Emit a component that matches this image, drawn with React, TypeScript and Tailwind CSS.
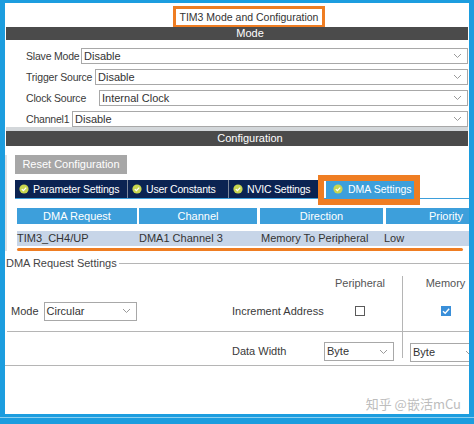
import React from 'react';

function Chevron({ color = '#9a9a9a' }: { color?: string }) {
  return (
    <svg width="9" height="6" viewBox="0 0 9 6" className="shrink-0">
      <path d="M1 1 L4.5 4.5 L8 1" fill="none" stroke={color} strokeWidth="1" />
    </svg>
  );
}

function CheckDot() {
  return (
    <svg width="10" height="10" viewBox="0 0 10 10" className="shrink-0">
      <circle cx="5" cy="5" r="4.6" fill="#c8d650" />
      <path d="M2.8 5.1 L4.4 6.6 L7.2 3.6" fill="none" stroke="#ffffff" strokeWidth="1.3" />
    </svg>
  );
}

function Select({ value, className }: { value: string; className: string }) {
  return (
    <div className={`flex items-center justify-between border border-[#a8a8a8] bg-white pl-[2px] pr-[5px] ${className}`}>
      <span className="text-[#333]">{value}</span>
      <Chevron />
    </div>
  );
}

const modeRows = [
  { label: 'Slave Mode', value: 'Disable', w: 'w-[55px]' },
  { label: 'Trigger Source', value: 'Disable', w: 'w-[69px]' },
  { label: 'Clock Source', value: 'Internal Clock', w: 'w-[73px]' },
  { label: 'Channel1', value: 'Disable', w: 'w-[46px]' },
];

const tabs = [
  { label: 'Parameter Settings', w: 'w-[113px]' },
  { label: 'User Constants', w: 'w-[101px]' },
  { label: 'NVIC Settings', w: 'w-[91px]' },
];

export default function App() {
  return (
    <div className="w-[474px] h-[424px] overflow-hidden bg-[#1c9ddf] font-['Liberation_Sans',Arial,sans-serif] text-[11px] leading-none">
      <div className="pl-[5px] pt-[3px] pr-[5px]">
        <div className="relative w-[464px] h-[411px] overflow-hidden bg-white text-[#3a3a3a]">
          {/* title */}
          <div className="h-[24px] flex items-end justify-center pl-[24px]">
            <div className="h-[21px] border-[3px] border-b-[2px] border-[#ef7d22] bg-white px-[4px] flex items-center text-[#333] text-[10.5px]">
              TIM3 Mode and Configuration
            </div>
          </div>

          <div className="mx-[1px] h-[13px] bg-[#4b4b4b] text-white text-center leading-[13px] pl-[26px]">Mode</div>

          <div className="pt-[8px] pl-[21px] pr-[1px] flex flex-col gap-[5px]">
            {modeRows.map((r) => (
              <div key={r.label} className="flex items-center h-[16px]">
                <span className={`${r.w} shrink-0 whitespace-nowrap text-[10.5px] tracking-[-0.2px]`}>{r.label}</span>
                <Select value={r.value} className="flex-1 h-[16px]" />
              </div>
            ))}
          </div>

          <div className="mx-[1px] h-[4px] bg-[#d3d7da]" />
          <div className="mx-[1px] h-[15px] bg-[#4b4b4b] text-white text-center leading-[15px] pl-[26px]">Configuration</div>

          <div className="border-l-[2px] border-[#dde1e5]">
            <div className="mt-[9px] ml-[8px] w-[112px] h-[19px] bg-[#a7a7a7] text-white flex items-center justify-center">
              Reset Configuration
            </div>

            {/* tabs */}
            <div className="mt-[6px] ml-[8px] flex border-b border-[#3d9fdb] h-[19px]">
              {tabs.map((t) => (
                <div key={t.label} className={`${t.w} shrink-0 h-[18px] bg-[#0b2352] border-r border-[#7c879b] text-white flex items-center gap-[4px] pl-[4px] text-[10.5px] tracking-[-0.2px]`}>
                  <CheckDot />
                  <span className="whitespace-nowrap">{t.label}</span>
                </div>
              ))}
              <div className="ml-[6px] w-[88px] shrink-0 h-[18px] bg-[#3d9fdb] text-white flex items-center gap-[5px] pl-[7px] text-[10.5px]">
                <CheckDot />
                <span className="whitespace-nowrap">DMA Settings</span>
              </div>
            </div>

            {/* table */}
            <div className="mt-[9px] ml-[10px] flex h-[16px] text-white">
              <div className="w-[120px] shrink-0 bg-[#3d9fdb] flex items-center justify-center">DMA Request</div>
              <div className="ml-[2px] w-[118px] shrink-0 bg-[#3d9fdb] flex items-center justify-center">Channel</div>
              <div className="ml-[3px] w-[123px] shrink-0 bg-[#3d9fdb] flex items-center justify-center">Direction</div>
              <div className="ml-[3px] w-[120px] shrink-0 bg-[#3d9fdb] flex items-center justify-center">Priority</div>
            </div>
            <div className="mt-[7px] ml-[10px] flex h-[15px] bg-[#c7d5e8] text-[#333]">
              <div className="w-[122px] shrink-0 flex items-center">TIM3_CH4/UP</div>
              <div className="w-[122px] shrink-0 flex items-center">DMA1 Channel 3</div>
              <div className="w-[123px] shrink-0 flex items-center">Memory To Peripheral</div>
              <div className="w-[80px] shrink-0 flex items-center">Low</div>
            </div>
            <div className="mt-[2px] ml-[10px] w-[446px] h-[3px] rounded-full bg-[#ef7d22]" />
          </div>

          {/* highlight around the active tab */}
          <div className="absolute left-[313px] top-[172px] w-[102px] h-[30px] border-[6px] border-[#ef7d22]" />

          {/* DMA request settings */}
          <div className="mt-[6px] flex items-center h-[12px]">
            <span className="whitespace-nowrap pl-[1px] text-[#444]">DMA Request Settings</span>
            <div className="flex-1 ml-[2px] h-px bg-[#b5b5b5]" />
          </div>

          <div className="mt-[7px] flex h-[15px] items-center">
            <div className="w-[313px] shrink-0" />
            <div className="w-[84px] shrink-0 text-center text-[#555]">Peripheral</div>
            <div className="w-[86px] shrink-0 h-full border-l border-[#b5b5b5] flex items-center justify-center text-[#555]">Memory</div>
          </div>

          <div className="ml-[2px] flex h-[41px] border-b border-[#b5b5b5]">
            <div className="w-[225px] shrink-0 flex items-center pl-[4px]">
              <span>Mode</span>
              <Select value="Circular" className="ml-[5px] w-[93px] h-[19px]" />
            </div>
            <div className="w-[86px] shrink-0 flex items-center whitespace-nowrap">Increment Address</div>
            <div className="w-[84px] shrink-0 flex items-center justify-center">
              <div className="w-[10px] h-[10px] border border-[#5a5a5a] bg-white" />
            </div>
            <div className="w-[86px] shrink-0 border-l border-[#b5b5b5] flex items-center justify-center">
              <svg width="10" height="10" viewBox="0 0 10 10">
                <rect x="0" y="0" width="10" height="10" fill="#3a8fd9" />
                <path d="M2 5.2 L4.2 7.3 L8.2 2.8" fill="none" stroke="#ffffff" strokeWidth="1.4" />
              </svg>
            </div>
          </div>

          <div className="flex h-[34px] border-b border-[#b5b5b5]">
            <div className="w-[227px] shrink-0" />
            <div className="w-[86px] shrink-0 flex items-center pt-[6px] whitespace-nowrap">Data Width</div>
            <div className="w-[84px] shrink-0 flex items-center pt-[6px]">
              <Select value="Byte" className="ml-[6px] w-[70px] h-[19px]" />
            </div>
            <div className="w-[86px] shrink-0 flex items-start">
              <div className="h-[26px] border-l border-[#b5b5b5]" />
              <Select value="Byte" className="ml-[7px] mt-[11px] w-[70px] h-[19px] shrink-0" />
            </div>
          </div>

          <div className="absolute right-[8px] bottom-[4px] text-[13px] text-[#bdbdbd] font-['Noto_Sans_CJK_SC','Liberation_Sans',sans-serif] [text-shadow:0_0_2px_#ffffff]">
            知乎 @嵌活mCu
          </div>
        </div>
      </div>
      <div className="h-[3px]" />
      <div className="h-[1px] bg-[#8ccff0]" />
    </div>
  );
}
